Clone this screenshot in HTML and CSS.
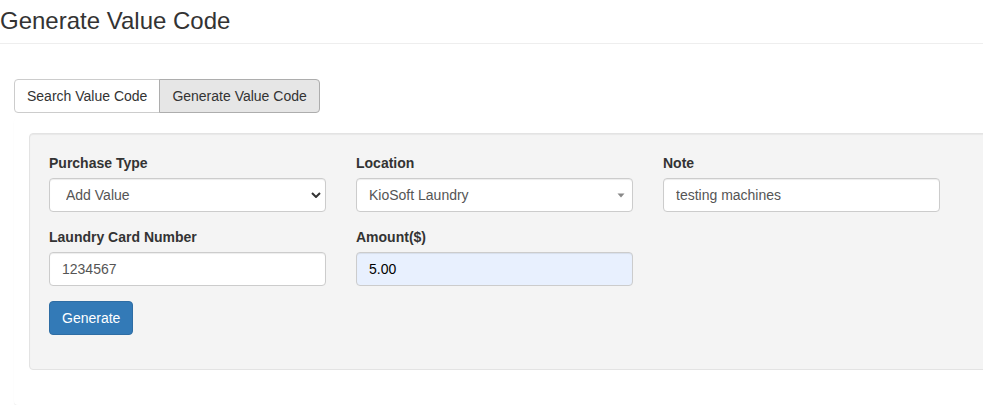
FILE: index.html
```html
<!DOCTYPE html>
<html lang="en">
<head>
<meta charset="utf-8">
<title>Generate Value Code</title>
<link rel="stylesheet" href="styles.css">
</head>
<body>
<div class="page">
  <header class="page-header">
    <h1 class="page-title">Generate Value Code</h1>
  </header>
  <main class="content">
    <div class="btn-group">
      <button type="button" class="btn btn-default">Search Value Code</button>
      <button type="button" class="btn btn-default active">Generate Value Code</button>
    </div>
    <section class="panel">
      <div class="panel-body">
        <form class="well">
          <div class="field-grid">
            <div class="form-group">
              <label class="control-label">Purchase Type</label>
              <div class="select-wrap">
                <select class="form-control native-select">
                  <option>Add Value</option>
                </select>
                <svg class="chevron" width="10" height="6" viewBox="0 0 10 6" aria-hidden="true"><path d="M1 1 L5 5 L9 1" fill="none" stroke="#333" stroke-width="2"/></svg>
              </div>
            </div>
            <div class="form-group">
              <label class="control-label">Location</label>
              <div class="form-control select2">
                <span class="select2-text">KioSoft Laundry</span>
                <svg class="triangle" width="8" height="5" viewBox="0 0 8 5" aria-hidden="true"><path d="M0.5 0.5 L7.5 0.5 L4 4.5 Z" fill="#888"/></svg>
              </div>
            </div>
            <div class="form-group">
              <label class="control-label">Note</label>
              <input class="form-control" type="text" value="testing machines">
            </div>
            <div class="form-group">
              <label class="control-label">Laundry Card Number</label>
              <input class="form-control" type="text" value="1234567">
            </div>
            <div class="form-group">
              <label class="control-label">Amount($)</label>
              <input class="form-control autofilled" type="text" value="5.00">
            </div>
          </div>
          <div class="form-group">
            <button type="button" class="btn btn-primary">Generate</button>
          </div>
        </form>
      </div>
    </section>
  </main>
</div>
</body>
</html>
```

FILE: styles.css
```css
* {
  box-sizing: border-box;
}

html, body {
  margin: 0;
  padding: 0;
  overflow: hidden;
  background: #fff;
}

body {
  font-family: "Liberation Sans", Arial, Helvetica, sans-serif;
  font-size: 14px;
  line-height: 20px;
  color: #333;
}

.page {
  width: 1200px;
}

.page-header {
  margin: 8px 0 0;
  padding-bottom: 9px;
  border-bottom: 1px solid #eee;
}

.page-title {
  margin: 0;
  font-size: 24px;
  line-height: 26px;
  font-weight: 400;
  color: #333;
}

.content {
  padding: 35px 0 0 14px;
}

.btn-group {
  display: flex;
}

.btn {
  font-family: inherit;
  font-size: 14px;
  line-height: 20px;
  padding: 6px 12px;
  border: 1px solid #ccc;
  border-radius: 4px;
  cursor: pointer;
  margin: 0;
}

.btn-default {
  background: #fff;
  color: #333;
}

.btn-group .btn:first-child {
  border-top-right-radius: 0;
  border-bottom-right-radius: 0;
}

.btn-group .btn:last-child {
  border-top-left-radius: 0;
  border-bottom-left-radius: 0;
  margin-left: -1px;
}

.btn-default.active {
  background: #e6e6e6;
  border-color: #adadad;
}

.btn-primary {
  background: #337ab7;
  border-color: #2e6da4;
  color: #fff;
}

.panel {
  margin-top: 5px;
  background: #fff;
  border-radius: 4px;
  box-shadow: 0 1px 1px rgba(0, 0, 0, 0.08);
}

.panel-body {
  padding: 15px;
}

.well {
  margin: 0 0 20px;
  padding: 19px;
  background: #f4f4f4;
  border: 1px solid #e3e3e3;
  border-radius: 4px;
  box-shadow: inset 0 1px 1px rgba(0, 0, 0, 0.05);
}

.field-grid {
  display: grid;
  grid-template-columns: repeat(3, 277px);
  column-gap: 30px;
}

.form-group {
  margin-bottom: 15px;
}

.control-label {
  display: block;
  font-weight: 700;
  margin-bottom: 5px;
  line-height: 20px;
}

.form-control {
  display: block;
  width: 100%;
  height: 34px;
  padding: 6px 12px;
  font-family: inherit;
  font-size: 14px;
  line-height: 20px;
  color: #555;
  background: #fff;
  border: 1px solid #ccc;
  border-radius: 4px;
  box-shadow: inset 0 1px 1px rgba(0, 0, 0, 0.075);
  margin: 0;
  outline: none;
}

.select-wrap {
  position: relative;
}

.native-select {
  appearance: none;
  -webkit-appearance: none;
  padding-left: 16px;
}

.chevron {
  position: absolute;
  right: 5px;
  top: 14px;
  pointer-events: none;
}

.select2 {
  display: flex;
  align-items: center;
  justify-content: space-between;
  padding-right: 7px;
}

.select2-text {
  color: #555;
}

.triangle {
  display: block;
  margin-top: 1px;
}

.autofilled {
  background: #e8f0fe;
  color: #000;
}
```
